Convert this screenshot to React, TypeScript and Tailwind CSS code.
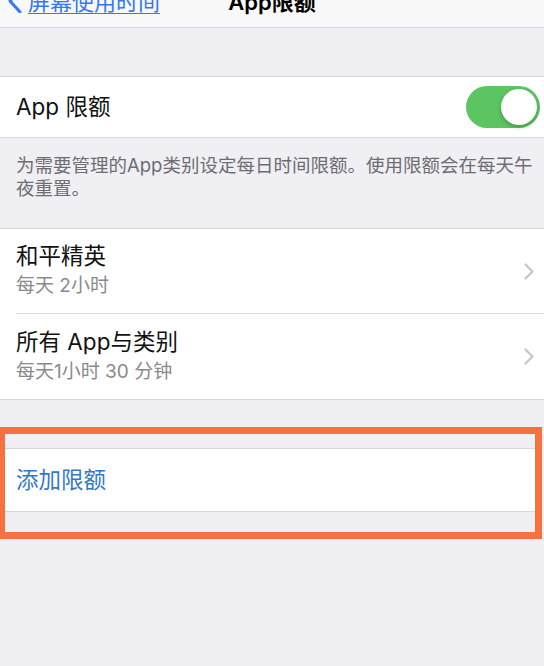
import React from 'react';

const font = { fontFamily: 'Inter, "Noto Sans CJK SC", sans-serif' };

function Chevron() {
  return (
    <svg width="10" height="17" viewBox="0 0 10 17" fill="none" className="shrink-0">
      <path d="M1.5 1.5 L8.5 8.5 L1.5 15.5" stroke="#c4c4c8" strokeWidth="2.2" strokeLinecap="round" strokeLinejoin="round" />
    </svg>
  );
}

function Toggle() {
  return (
    <div className="w-[74px] h-[42px] rounded-full bg-[#5cc461] p-[3px] flex justify-end">
      <div className="w-[36px] h-[36px] rounded-full bg-white shadow-[0_2px_4px_rgba(0,0,0,0.25)]" />
    </div>
  );
}

function LimitRow({ title, sub, last }: { title: string; sub: string; last?: boolean }) {
  return (
    <div className="pl-4 bg-white">
      <div className={`h-[85px] flex items-center pr-[10px] ${last ? '' : 'border-b border-[#dcdce0]'}`}>
        <div className="flex-1 flex flex-col -mt-[2px]">
          <span className="text-[22.5px] leading-[30px] text-[#111]">{title}</span>
          <span className="text-[19px] leading-[26px] text-[#8a8a8e] mt-[2px]">{sub}</span>
        </div>
        <Chevron />
      </div>
    </div>
  );
}

export default function App() {
  return (
    <div className="w-[544px] h-[666px] bg-[#efeff4] overflow-hidden" style={font}>
      {/* nav bar, scrolled so that only its lower edge shows */}
      <div className="h-[28px] bg-[#f8f8f8] border-b border-[#d6d6da] overflow-hidden flex items-end">
        <div className="relative w-full flex justify-center mb-[10px]">
          <div className="absolute left-[8px] bottom-0 flex items-end text-[#3478f6]">
            <svg width="14" height="24" viewBox="0 0 14 24" fill="none" className="mb-[4px]">
              <path d="M12 1 L2 12 L12 23" stroke="#3478f6" strokeWidth="3" strokeLinecap="round" strokeLinejoin="round" />
            </svg>
            <span className="ml-[6px] text-[22px] leading-[30px] underline decoration-1 underline-offset-[3px]">屏幕使用时间</span>
          </div>
          <span className="text-[22px] leading-[30px] font-semibold text-black">App限额</span>
        </div>
      </div>

      <div className="h-[48px]" />

      <div className="bg-white border-y border-[#d8d8dc] h-[62px] flex items-center justify-between pl-4 pr-[4px]">
        <span className="text-[22.5px] text-[#111]">App 限额</span>
        <Toggle />
      </div>

      <p className="pl-4 pr-1 pt-[16px] text-[18.5px] leading-[23px] text-[#6d6d72]">
        为需要管理的App类别设定每日时间限额。使用限额会在每天午夜重置。
      </p>

      <div className="mt-[28px] border-y border-[#d8d8dc]">
        <LimitRow title="和平精英" sub="每天 2小时" />
        <LimitRow title="所有 App与类别" sub="每天1小时 30 分钟" last />
      </div>

      <div className="mt-[27px] w-[542px] border-[7px] border-l-[5px] border-[#f7703f]">
        <div className="h-[14px]" />
        <div className="bg-white border-y border-[#d8d8dc] h-[64px] flex items-center pl-[11px]">
          <span className="text-[22.5px] text-[#3478c6]">添加限额</span>
        </div>
        <div className="h-[20px]" />
      </div>
    </div>
  );
}
